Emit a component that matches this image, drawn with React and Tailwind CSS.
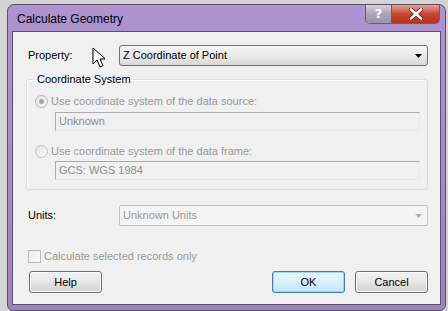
import React from "react";

const font = { fontFamily: '"Liberation Sans", Arial, sans-serif' };

const Arrow = ({ color = "#000" }) => (
  <svg width="7" height="4" viewBox="0 0 7 4">
    <path d="M0 0h7L3.5 4z" fill={color} />
  </svg>
);

const Button = ({ children, primary }) => (
  <div
    className={`w-[73px] h-[22px] rounded-[3px] border flex items-center justify-center text-[11px] text-black ${
      primary
        ? "border-[#3c7fb1] bg-gradient-to-b from-[#eaf6fd] via-[#d9f0fc] to-[#bee6fd] shadow-[inset_0_0_0_1px_#9ed7f3]"
        : "border-[#707070] bg-gradient-to-b from-[#f4f4f4] via-[#e6e6e6] to-[#d2d2d2] shadow-[inset_0_0_0_1px_#fbfbfb]"
    }`}
  >
    {children}
  </div>
);

const TextBox = ({ value }) => (
  <div className="h-[19px] ml-[28px] mr-[7px] border border-t-[#abadb3] border-l-[#abadb3] border-r-[#e3e9ef] border-b-[#e3e9ef] bg-[#f0f0f0] flex items-center pl-[3px] text-[11px] text-[#8e8e8e]">
    {value}
  </div>
);

export default function App() {
  return (
    <div className="w-[448px] h-[311px] bg-[#d4d4d4] pl-[7px] pt-[4px] overflow-hidden relative" style={font}>
      <div className="w-[439px] h-[307px] rounded-t-[7px] rounded-b-[6px] border border-[#5c5068] bg-gradient-to-b from-[#ad93cf] via-[#a68bc8] to-[#9c84bc] flex flex-col px-[4px] pb-[5px]">
        {/* title bar */}
        <div className="h-[26px] flex items-start relative">
          <div className="pl-[5px] pt-[7px] text-[12px] text-black leading-[14px]">Calculate Geometry</div>
          <div className="ml-auto mr-[1px] flex h-[19px] rounded-b-[5px] overflow-hidden border border-t-0 border-[#6b5a80]">
            <div className="w-[26px] bg-gradient-to-b from-[#d6d0de] via-[#aba4b8] to-[#9a93aa] flex items-center justify-center text-white text-[13px] font-bold border-r border-[#6b5a80]" style={{ fontFamily: '"DejaVu Sans", sans-serif' }}>
              ?
            </div>
            <div className="w-[47px] bg-gradient-to-b from-[#e6a093] via-[#c9442f] to-[#b8331f] flex items-center justify-center">
              <svg width="14" height="12" viewBox="0 0 14 12">
                <path d="M2 1.5l10 9M12 1.5l-10 9" stroke="#5a1a10" strokeWidth="4" strokeLinecap="round" />
                <path d="M2 1.5l10 9M12 1.5l-10 9" stroke="#fff" strokeWidth="2.6" strokeLinecap="round" />
              </svg>
            </div>
          </div>
        </div>

        {/* client area */}
        <div className="flex-1 border border-[#5a5266] bg-[#f0f0f0] flex flex-col pl-[13px] pr-[12px] pt-[13px] relative">
          <div className="flex items-center h-[21px]">
            <div className="w-[93px] pl-[2px] text-[11px] text-black">Property:</div>
            <div className="flex-1 h-[21px] rounded-[3px] border border-[#707070] bg-gradient-to-b from-[#f5f5f5] via-[#eaeaea] to-[#d8d8d8] flex items-center pl-[3px] pr-[5px] text-[11px] text-black">
              <span>Z Coordinate of Point</span>
              <span className="ml-auto flex">
                <Arrow />
              </span>
            </div>
          </div>

          <fieldset className="mt-[7px] border border-[#d5dfe5] rounded-[3px] pb-[9px] shadow-[inset_1px_1px_0_#fff]">
            <legend className="ml-[8px] px-[2px] text-[11px] leading-[13px] text-black">Coordinate System</legend>
            <div className="mt-[7px] h-[16px] flex items-center pl-[8px] text-[11px] text-[#9a9a9a]">
              <div className="w-[13px] h-[13px] rounded-full border border-[#b4b4b4] bg-gradient-to-br from-[#e4e4e4] to-[#f8f8f8] flex items-center justify-center">
                <div className="w-[5px] h-[5px] rounded-full bg-[#a8a8a8]" />
              </div>
              <span className="ml-[3px]">Use coordinate system of the data source:</span>
            </div>
            <div className="mt-[3px]">
              <TextBox value="Unknown" />
            </div>
            <div className="mt-[12px] h-[16px] flex items-center pl-[8px] text-[11px] text-[#9a9a9a]">
              <div className="w-[13px] h-[13px] rounded-full border border-[#c4c4c4] bg-gradient-to-br from-[#e2e2e2] to-[#f9f9f9]" />
              <span className="ml-[3px]">Use coordinate system of the data frame:</span>
            </div>
            <div className="mt-[2px]">
              <TextBox value="GCS: WGS 1984" />
            </div>
          </fieldset>

          <div className="mt-[15px] flex items-center h-[21px]">
            <div className="w-[93px] pl-[2px] text-[11px] text-black">Units:</div>
            <div className="flex-1 h-[21px] rounded-[2px] border border-[#c2c2c2] bg-[#f4f4f4] flex items-center pl-[3px] pr-[5px] text-[11px] text-[#9a9a9a]">
              <span>Unknown Units</span>
              <span className="ml-auto flex">
                <Arrow color="#b0b0b0" />
              </span>
            </div>
          </div>

          <div className="mt-[24px] h-[13px] flex items-center pl-[2px] text-[11px] text-[#9a9a9a]">
            <div className="w-[13px] h-[13px] border border-[#b8b8b8] bg-gradient-to-br from-[#ececec] to-[#fafafa]" />
            <span className="ml-[3px]">Calculate selected records only</span>
          </div>

          <div className="mt-[8px] flex items-center pl-[3px]">
            <Button>Help</Button>
            <div className="ml-auto flex gap-[10px]">
              <Button primary>OK</Button>
              <Button>Cancel</Button>
            </div>
          </div>

          {/* mouse pointer */}
          <svg className="absolute left-[79px] top-[15px]" width="13" height="21" viewBox="0 0 13 21">
            <path d="M1 1v16l4-4 3 7 3-1.3-3-6.7h5.5z" fill="#fff" stroke="#000" strokeWidth="1" strokeLinejoin="round" />
          </svg>
        </div>
      </div>
    </div>
  );
}
